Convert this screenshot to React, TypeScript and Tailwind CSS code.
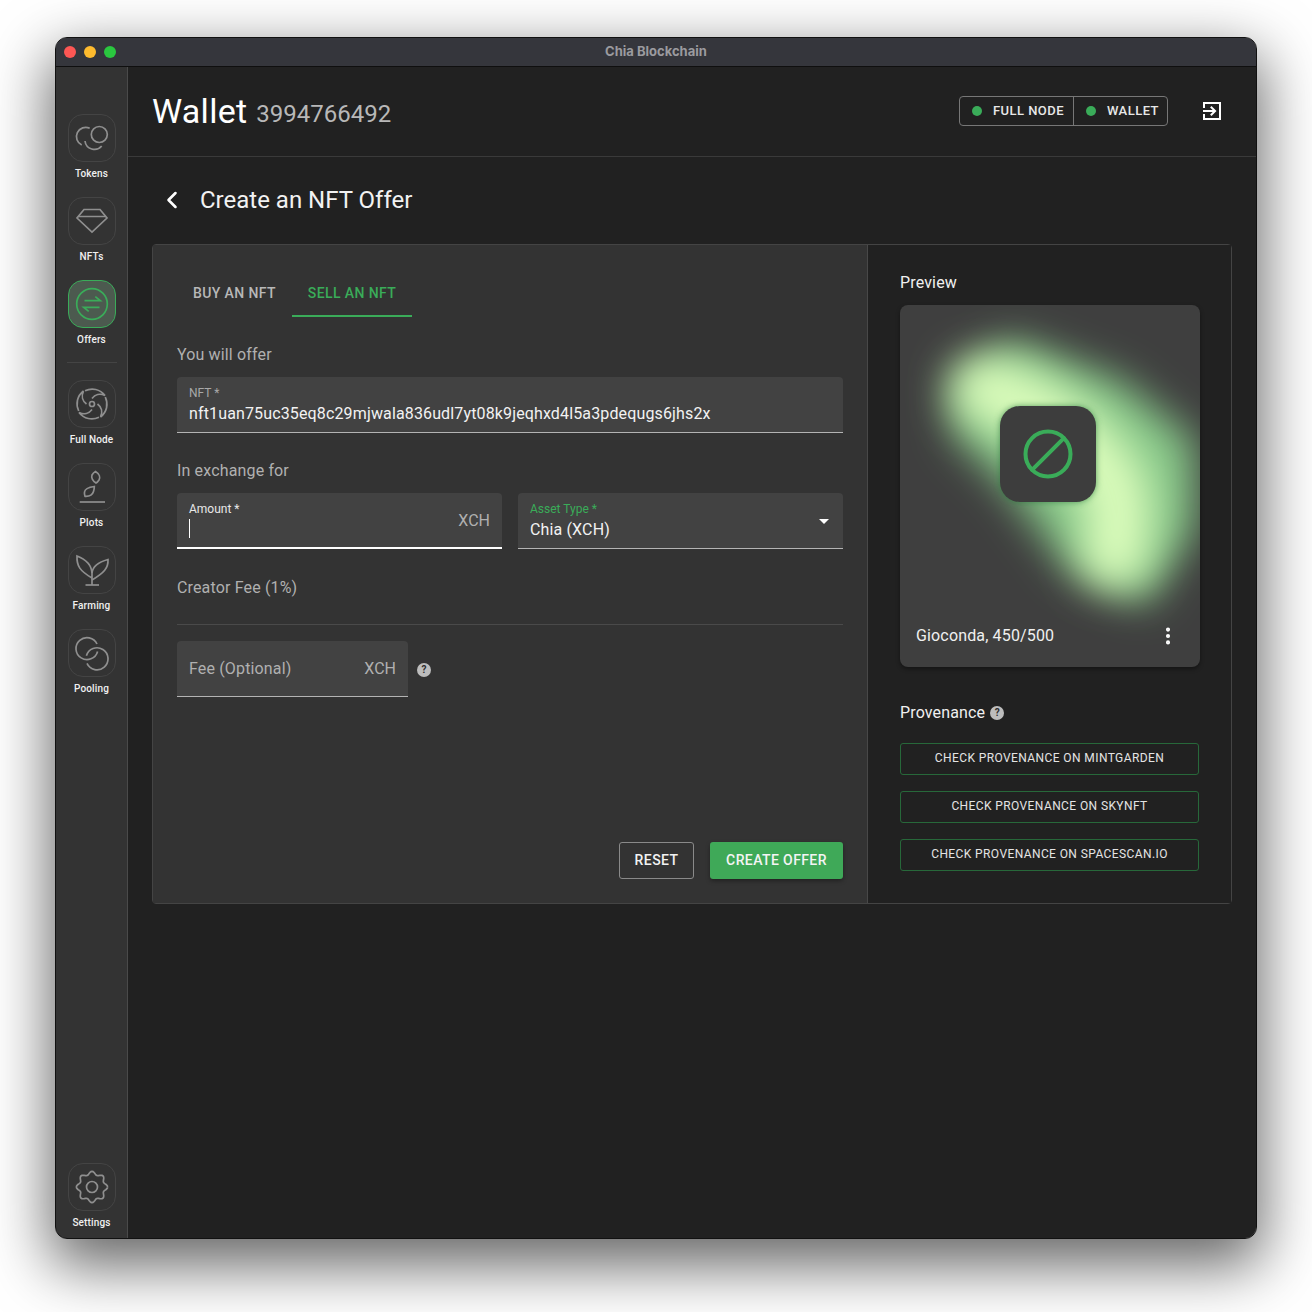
import React from 'react';
import { ChevronLeft, EllipsisVertical, Ban } from 'lucide-react';

const ROBOTO = 'font-[Roboto,sans-serif]';

// scalloped gear outline, 8 lobes
const gearPath = Array.from({ length: 97 }, (_, i) => {
  const a = (i / 96) * Math.PI * 2;
  const r = 14 + 1.600 * Math.cos(8 * a);
  return `${i === 0 ? 'M' : 'L'}${(18 + r * Math.cos(a)).toFixed(2)} ${(18 + r * Math.sin(a)).toFixed(2)}`;
}).join(' ');

const icons: Record<string, React.ReactNode> = {
  tokens: (
    <>
      <circle cx="25.300" cy="14.500" r="8" />
      <path d="M15.700 8.300A9 9 0 0 0 7.700 25" />
      <path d="M11 21A9.500 9.500 0 0 0 27.700 26" />
    </>
  ),
  nfts: (
    <>
      <path d="M10 6.500h16l7 8.500-15 14L3 15z" />
      <path d="M4 13.500h28" />
    </>
  ),
  offers: (
    <>
      <circle cx="18" cy="18" r="15.300" />
      <path d="M10.500 14.700h15.800l-5-4" />
      <path d="M25.500 21.300H9.700l5 4" />
    </>
  ),
  node: (
    <>
      <circle cx="18" cy="18" r="2.500" />
      {[0, 90, 180, 270].map((deg) => (
        <path key={deg} transform={`rotate(${deg} 18 18)`} d="M11 4.700C18 1.500 26 3 31 9.500C26 7 21 8.500 18 12.500" />
      ))}
    </>
  ),
  plots: (
    <>
      <path d="M21.500 2.500C25.500 5 26.500 8.500 25 11C24 12.500 23 13.500 22 14C18.500 12 17 8.500 18 6C18.800 4.500 20 3.300 21.500 2.500z" />
      <path d="M20.300 17.500C16 18 11 19.500 10.500 23C10.300 24.500 10.500 26 11 27.300C15 27.500 18.500 26 19.500 22.500C20 21 20.300 19 20.300 17.500z" />
      <path d="M5.700 33H31" />
    </>
  ),
  farming: (
    <>
      <path d="M18 33V21C17.500 13 12 7.500 3 4C2.500 14 6 19 18 26" />
      <path d="M18 21C18.500 15 25 10 34 7.500C34.500 16 30 21 18 28" />
      <path d="M11.500 33H25" />
    </>
  ),
  pooling: (
    <>
      <path d="M23.600 16.500A11 11 0 1 1 23 9" />
      <path d="M12.400 20.850A11 11 0 1 1 13 28.400" />
    </>
  ),
  settings: (
    <>
      <circle cx="18" cy="18" r="5.500" />
      <path d={gearPath} />
    </>
  ),
};

function NavItem({ icon, label, active }: { icon: string; label: string; active?: boolean }) {
  return (
    <div className="flex h-[66px] w-[72px] flex-col items-center">
      <div
        className={
          active
            ? 'flex h-12 w-12 items-center justify-center rounded-[15px] border border-[#3aac59] bg-[#4c5a4f] text-[#3aac59]'
            : 'flex h-12 w-12 items-center justify-center rounded-[15px] border border-[#444444] text-[#8f8f8f]'
        }
      >
        <svg width="36" height="36" viewBox="0 0 36 36" fill="none" stroke="currentColor" strokeWidth="1.700">
          {icons[icon]}
        </svg>
      </div>
      <div className="mt-[6px] text-[10px] leading-[12px] font-medium tracking-[0.15px] text-[#f0f0f0]">{label}</div>
    </div>
  );
}

function Field({ label, value, suffix, width, active, green, select }: {
  label?: string; value?: string; suffix?: string; width: string; active?: boolean; green?: boolean; select?: boolean;
}) {
  return (
    <div className={`relative h-14 shrink-0 rounded-t bg-[#424242] px-3 ${width} ${active ? 'border-b-2 border-white' : 'border-b border-[#b4b4b4]'}`}>
      {label && (
        <div className={`pt-[9px] text-[12px] leading-[14px] ${green ? 'text-[#3aac59]' : active ? 'text-[#e8e8e8]' : 'text-[#a8a8a8]'}`}>
          {label}
        </div>
      )}
      {value && <div className="mt-[3px] text-[16px] leading-[22px] tracking-[0.14px] whitespace-nowrap text-[#f2f2f2]">{value}</div>}
      {active && <div className="mt-[3px] h-[19px] w-px bg-white" />}
      {suffix && <div className="absolute top-[18px] right-3 text-[16px] leading-[20px] text-[#b0b0b0]">{suffix}</div>}
      {select && <div className="absolute top-[26px] right-[14px] h-0 w-0 border-x-[5px] border-t-[5px] border-x-transparent border-t-white" />}
    </div>
  );
}

function HelpDot() {
  return (
    <span className="flex h-[14px] w-[14px] items-center justify-center rounded-full bg-[#bdbdbd] text-[10px] leading-none font-bold text-[#2c2c2c]">?</span>
  );
}

function ProvenanceButton({ label }: { label: string }) {
  return (
    <div className="flex h-8 w-[299px] items-center justify-center rounded-[3px] border border-[#27683a] pb-[2px] text-[12px] tracking-[0.4px] text-[#e4e4e4]">
      {label}
    </div>
  );
}

export default function App() {
  return (
    <div className={`min-h-[1312px] bg-white pt-[38px] pl-[56px] ${ROBOTO}`}>
      <div className="flex h-[1200px] w-[1200px] flex-col overflow-hidden rounded-[11px] bg-[#212121] shadow-[0_22px_60px_6px_rgba(0,0,0,0.6)] outline outline-[#111111]">
        <div className="relative flex h-[29px] shrink-0 items-center justify-center border-b border-[#0f0f0f] bg-[#35363c] font-[Inter,sans-serif] text-[13px] font-bold text-[#9b9b9f]">
          <div className="absolute top-[8px] left-[8px] flex gap-[8px]">
            <span className="h-3 w-3 rounded-full bg-[#fd5754]" />
            <span className="h-3 w-3 rounded-full bg-[#febb2e]" />
            <span className="h-3 w-3 rounded-full bg-[#2ac73f]" />
          </div>
          Chia Blockchain
        </div>

        <div className="flex min-h-0 flex-1">
          <div className="flex w-[72px] shrink-0 flex-col items-center border-r border-[#4a4a4a] bg-[#333333] pt-[47px] pb-[9px]">
            <div className="flex flex-col gap-[17px]">
              <NavItem icon="tokens" label="Tokens" />
              <NavItem icon="nfts" label="NFTs" />
              <NavItem icon="offers" label="Offers" active />
            </div>
            <div className="mt-4 mb-[17px] h-px w-[50px] bg-[#444444]" />
            <div className="flex flex-col gap-[17px]">
              <NavItem icon="node" label="Full Node" />
              <NavItem icon="plots" label="Plots" />
              <NavItem icon="farming" label="Farming" />
              <NavItem icon="pooling" label="Pooling" />
            </div>
            <div className="mt-auto">
              <NavItem icon="settings" label="Settings" />
            </div>
          </div>

          <div className="flex min-w-0 flex-1 flex-col">
            <div className="flex h-[90px] shrink-0 items-center justify-between border-b border-[#3a3a3a] pr-[24px] pl-6">
              <div className="flex items-baseline gap-[9px] pt-[2px] whitespace-nowrap">
                <span className="text-[34px] leading-[40px] tracking-[0.25px] text-white">Wallet</span>
                <span className="-translate-y-px text-[24px] leading-[40px] tracking-[0px] text-[#b8b8b8]">3994766492</span>
              </div>
              <div className="flex items-center gap-[32px] pb-[2px]">
                <div className="flex h-[30px] items-center rounded border border-[#777777] text-[13px] font-medium tracking-[0.45px] text-[#e8e8e8]">
                  <div className="flex h-full w-[114px] items-center gap-[11px] border-r border-[#777777] pl-3">
                    <span className="h-[10px] w-[10px] rounded-full bg-[#3aac59]" />
                    FULL NODE
                  </div>
                  <div className="flex h-full w-[93px] items-center gap-[11px] pl-3">
                    <span className="h-[10px] w-[10px] rounded-full bg-[#3aac59]" />
                    WALLET
                  </div>
                </div>
                <svg width="24" height="24" viewBox="0 0 24 24" fill="white" className="mr-[8px]">
                  <path d="M10.090 15.590L11.500 17l5-5-5-5-1.410 1.410L12.670 11H3v2h9.670l-2.580 2.590zM21 3H3v6h2V5h14v14H5v-4H3v6h18V3z" />
                </svg>
              </div>
            </div>

            <div className="flex h-[87px] shrink-0 items-center pb-[2px] pl-[30px]">
              <ChevronLeft size={28} strokeWidth={2.200} className="text-white" />
              <div className="ml-[14px] text-[24px] leading-7 tracking-[0px] text-[#f2f2f2]">Create an NFT Offer</div>
            </div>

            <div className="mx-6 flex h-[660px] rounded border border-[#444444]">
              <div className="flex w-[715px] shrink-0 flex-col border-r border-[#484848] bg-[#333333] px-6">
                <div className="mt-[23px] flex h-[49px] items-center text-[14px] font-medium tracking-[0.4px]">
                  <div className="flex h-full w-[115px] items-center justify-center pt-[1px] text-[#b8b8b8]">BUY AN NFT</div>
                  <div className="flex h-full w-[120px] items-center justify-center border-b-2 border-[#3aac59] pt-[3px] text-[#3aac59]">SELL AN NFT</div>
                </div>
                <div className="mt-[28px] text-[16px] leading-5 tracking-[0.15px] text-[#b0b0b0]">You will offer</div>
                <div className="mt-[12px]">
                  <Field label="NFT *" value="nft1uan75uc35eq8c29mjwala836udl7yt08k9jeqhxd4l5a3pdequgs6jhs2x" width="w-[666px]" />
                </div>
                <div className="mt-[28px] text-[16px] leading-5 tracking-[0.15px] text-[#b0b0b0]">In exchange for</div>
                <div className="mt-[12px] flex gap-4">
                  <Field label="Amount *" suffix="XCH" width="w-[325px]" active />
                  <Field label="Asset Type *" value="Chia (XCH)" width="w-[325px]" green select />
                </div>
                <div className="mt-[29px] text-[16px] leading-5 tracking-[0.15px] text-[#b0b0b0]">Creator Fee (1%)</div>
                <div className="mt-[26px] h-px w-[666px] bg-[#4a4a4a]" />
                <div className="mt-4 flex items-center gap-[9px]">
                  <div className="relative h-14 w-[231px] rounded-t border-b border-[#b4b4b4] bg-[#424242] px-3">
                    <div className="pt-[18px] text-[16px] leading-5 tracking-[0.15px] text-[#b0b0b0]">Fee (Optional)</div>
                    <div className="absolute top-[18px] right-3 text-[16px] leading-5 text-[#b0b0b0]">XCH</div>
                  </div>
                  <div className="pt-[2px]">
                    <HelpDot />
                  </div>
                </div>
                <div className="mt-[145px] flex justify-end gap-4">
                  <div className="flex h-[37px] w-[75px] items-center justify-center rounded-[3px] border border-[#8a8a8a] text-[14px] font-medium tracking-[0.4px] text-[#f2f2f2]">RESET</div>
                  <div className="flex h-[37px] w-[133px] items-center justify-center rounded-[3px] bg-[#3fa958] text-[14px] font-medium tracking-[0.4px] text-[#f4f4f4] shadow-[0_2px_4px_rgba(0,0,0,0.35)]">CREATE OFFER</div>
                </div>
              </div>

              <div className="flex-1 bg-[#212121] pt-[28px] pl-[32px]">
                <div className="text-[16px] leading-5 tracking-[0.15px] text-[#f0f0f0]">Preview</div>
                <div className="relative mt-[12px] h-[362px] w-[300px] overflow-hidden rounded-lg bg-[#3f3f3f] shadow-[0_2px_4px_rgba(0,0,0,0.4)]">
                  <svg width="300" height="362" viewBox="0 0 300 362" className="block">
                    <defs>
                      <filter id="outerBlur" filterUnits="userSpaceOnUse" x="-100" y="-100" width="500" height="562">
                        <feGaussianBlur stdDeviation="20" />
                      </filter>
                      <filter id="coreBlur" filterUnits="userSpaceOnUse" x="-100" y="-100" width="500" height="562">
                        <feGaussianBlur stdDeviation="21" />
                      </filter>
                    </defs>
                    <path d="M50 75 L110 35 L220 75 L295 135 L295 225 L245 300 L170 265 L105 180 L55 130z" fill="#86c888" filter="url(#outerBlur)" />
                    <path d="M85 85 C115 92 150 110 175 135 C205 160 222 185 218 215 L215 250" fill="none" stroke="#dcfdbc" strokeWidth="64" strokeLinecap="round" filter="url(#coreBlur)" />
                  </svg>
                  <div className="absolute top-[101px] left-[100px] flex h-24 w-24 items-center justify-center rounded-[20px] bg-[#3d3d3d] pb-[1px] text-[#3aac59] shadow-[0_0_6px_rgba(40,120,60,0.7)]">
                    <Ban size={54} strokeWidth={1.800} className="-scale-x-100" />
                  </div>
                  <div className="absolute right-0 bottom-0 left-0 flex h-[62px] items-center justify-between pr-[21px] pb-[1px] pl-4 text-[16px] tracking-[0.15px] text-[#f0f0f0]">
                    Gioconda, 450/500
                    <EllipsisVertical size={22} strokeWidth={2.500} className="text-white" />
                  </div>
                </div>
                <div className="mt-[36px] flex items-center gap-[5px] text-[16px] leading-5 tracking-[0.15px] text-[#f0f0f0]">
                  Provenance
                  <HelpDot />
                </div>
                <div className="mt-[20px] flex flex-col gap-4">
                  <ProvenanceButton label="CHECK PROVENANCE ON MINTGARDEN" />
                  <ProvenanceButton label="CHECK PROVENANCE ON SKYNFT" />
                  <ProvenanceButton label="CHECK PROVENANCE ON SPACESCAN.IO" />
                </div>
              </div>
            </div>
          </div>
        </div>
      </div>
    </div>
  );
}
